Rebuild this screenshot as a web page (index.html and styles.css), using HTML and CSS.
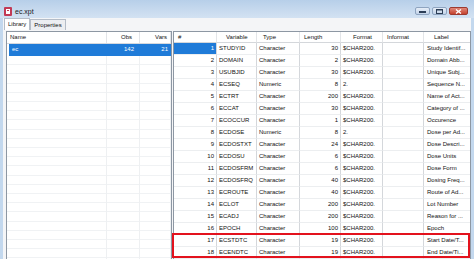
FILE: index.html
```html
<!DOCTYPE html>
<html lang="en">

<head>
    <meta charset="UTF-8">
    <meta name="viewport" content="width=device-width, initial-scale=1.0">
    <title>ec.xpt</title>
    <link rel="stylesheet" href="styles.css">
</head>

<body>
    <div class="window">
        <div class="titlebar">
            <svg class="app-icon" width="8" height="9" viewBox="0 0 8 9">
                <rect x="0" y="0" width="8" height="9" rx="1" fill="#c23a55" />
                <rect x="2" y="2" width="4" height="5" fill="#fff" />
                <rect x="3" y="3" width="2" height="1" fill="#c23a55" />
            </svg>
            <span class="title">ec.xpt</span>
            <div class="controls">
                <span class="ctl">
                    <svg width="7" height="3" viewBox="0 0 7 3"><rect x="0" y="1" width="7" height="2" fill="#2c3e57" /></svg>
                </span>
                <span class="ctl">
                    <svg width="7" height="5" viewBox="0 0 7 5"><rect x="0.5" y="0.5" width="6" height="4" fill="none" stroke="#2c3e57" /><rect x="0" y="0" width="7" height="1.5" fill="#2c3e57" /></svg>
                </span>
                <span class="ctl close">
                    <svg width="7" height="5" viewBox="0 0 7 5"><path d="M1 0.5 L6 4.5 M6 0.5 L1 4.5" stroke="#fff" stroke-width="1.4" /></svg>
                </span>
            </div>
        </div>

        <div class="client">
            <div class="tabs">
                <span class="tab active">Library</span>
                <span class="tab">Properties</span>
            </div>

            <div class="panes">
                <div class="members">
                    <div class="mrow mhead">
                        <span>Name</span>
                        <span class="num">Obs</span>
                        <span class="num">Vars</span>
                    </div>
                    <div class="mrow selected">
                        <span>ec</span>
                        <span class="num">142</span>
                        <span class="num">21</span>
                    </div>
                    <div class="mfill">
                        <span></span><span></span><span></span>
                    </div>
                </div>

                <div class="vars">
                    <div class="vrow vhead">
                        <span class="c-num">#</span>
                        <span class="c-var">Variable</span>
                        <span class="c-type">Type</span>
                        <span class="c-len">Length</span>
                        <span class="c-fmt">Format</span>
                        <span class="c-inf">Informat</span>
                        <span class="c-lbl">Label</span>
                    </div>
                    <div class="vrow current">
                        <span class="c-num">1</span><span class="c-var">STUDYID</span><span class="c-type">Character</span><span class="c-len">30</span><span class="c-fmt">$CHAR200.</span><span class="c-inf"></span><span class="c-lbl">Study Identif...</span>
                    </div>
                    <div class="vrow">
                        <span class="c-num">2</span><span class="c-var">DOMAIN</span><span class="c-type">Character</span><span class="c-len">2</span><span class="c-fmt">$CHAR200.</span><span class="c-inf"></span><span class="c-lbl">Domain Abb...</span>
                    </div>
                    <div class="vrow">
                        <span class="c-num">3</span><span class="c-var">USUBJID</span><span class="c-type">Character</span><span class="c-len">30</span><span class="c-fmt">$CHAR200.</span><span class="c-inf"></span><span class="c-lbl">Unique Subj...</span>
                    </div>
                    <div class="vrow">
                        <span class="c-num">4</span><span class="c-var">ECSEQ</span><span class="c-type">Numeric</span><span class="c-len">8</span><span class="c-fmt">2.</span><span class="c-inf"></span><span class="c-lbl">Sequence N...</span>
                    </div>
                    <div class="vrow">
                        <span class="c-num">5</span><span class="c-var">ECTRT</span><span class="c-type">Character</span><span class="c-len">200</span><span class="c-fmt">$CHAR200.</span><span class="c-inf"></span><span class="c-lbl">Name of Act...</span>
                    </div>
                    <div class="vrow">
                        <span class="c-num">6</span><span class="c-var">ECCAT</span><span class="c-type">Character</span><span class="c-len">30</span><span class="c-fmt">$CHAR200.</span><span class="c-inf"></span><span class="c-lbl">Category of ...</span>
                    </div>
                    <div class="vrow">
                        <span class="c-num">7</span><span class="c-var">ECOCCUR</span><span class="c-type">Character</span><span class="c-len">1</span><span class="c-fmt">$CHAR200.</span><span class="c-inf"></span><span class="c-lbl">Occurence</span>
                    </div>
                    <div class="vrow">
                        <span class="c-num">8</span><span class="c-var">ECDOSE</span><span class="c-type">Numeric</span><span class="c-len">8</span><span class="c-fmt">2.</span><span class="c-inf"></span><span class="c-lbl">Dose per Ad...</span>
                    </div>
                    <div class="vrow">
                        <span class="c-num">9</span><span class="c-var">ECDOSTXT</span><span class="c-type">Character</span><span class="c-len">24</span><span class="c-fmt">$CHAR200.</span><span class="c-inf"></span><span class="c-lbl">Dose Descri...</span>
                    </div>
                    <div class="vrow">
                        <span class="c-num">10</span><span class="c-var">ECDOSU</span><span class="c-type">Character</span><span class="c-len">6</span><span class="c-fmt">$CHAR200.</span><span class="c-inf"></span><span class="c-lbl">Dose Units</span>
                    </div>
                    <div class="vrow">
                        <span class="c-num">11</span><span class="c-var">ECDOSFRM</span><span class="c-type">Character</span><span class="c-len">6</span><span class="c-fmt">$CHAR200.</span><span class="c-inf"></span><span class="c-lbl">Dose Form</span>
                    </div>
                    <div class="vrow">
                        <span class="c-num">12</span><span class="c-var">ECDOSFRQ</span><span class="c-type">Character</span><span class="c-len">40</span><span class="c-fmt">$CHAR200.</span><span class="c-inf"></span><span class="c-lbl">Dosing Freq...</span>
                    </div>
                    <div class="vrow">
                        <span class="c-num">13</span><span class="c-var">ECROUTE</span><span class="c-type">Character</span><span class="c-len">40</span><span class="c-fmt">$CHAR200.</span><span class="c-inf"></span><span class="c-lbl">Route of Ad...</span>
                    </div>
                    <div class="vrow">
                        <span class="c-num">14</span><span class="c-var">ECLOT</span><span class="c-type">Character</span><span class="c-len">200</span><span class="c-fmt">$CHAR200.</span><span class="c-inf"></span><span class="c-lbl">Lot Number</span>
                    </div>
                    <div class="vrow">
                        <span class="c-num">15</span><span class="c-var">ECADJ</span><span class="c-type">Character</span><span class="c-len">200</span><span class="c-fmt">$CHAR200.</span><span class="c-inf"></span><span class="c-lbl">Reason for ...</span>
                    </div>
                    <div class="vrow">
                        <span class="c-num">16</span><span class="c-var">EPOCH</span><span class="c-type">Character</span><span class="c-len">100</span><span class="c-fmt">$CHAR200.</span><span class="c-inf"></span><span class="c-lbl">Epoch</span>
                    </div>
                    <div class="marked">
                        <div class="vrow">
                            <span class="c-num">17</span><span class="c-var">ECSTDTC</span><span class="c-type">Character</span><span class="c-len">19</span><span class="c-fmt">$CHAR200.</span><span class="c-inf"></span><span class="c-lbl">Start Date/T...</span>
                        </div>
                        <div class="vrow">
                            <span class="c-num">18</span><span class="c-var">ECENDTC</span><span class="c-type">Character</span><span class="c-len">19</span><span class="c-fmt">$CHAR200.</span><span class="c-inf"></span><span class="c-lbl">End Date/Ti...</span>
                        </div>
                    </div>
                </div>
            </div>
        </div>
    </div>
</body>

</html>
```

FILE: styles.css
```css
* {
    box-sizing: border-box;
}

body {
    margin: 0;
    width: 474px;
    height: 259px;
    overflow: hidden;
    background: #c3d8ee;
    font-family: "Liberation Sans", Arial, sans-serif;
    font-size: 6px;
    color: #111;
}

.window {
    height: 259px;
    display: flex;
    flex-direction: column;
}

/* title bar */
.titlebar {
    height: 18px;
    padding: 4px 6px 0 4px;
    display: flex;
    align-items: center;
    background: linear-gradient(#b7cfe9, #d3e2f2);
}

.app-icon {
    display: block;
}

.title {
    margin-left: 3px;
    font-size: 7px;
    color: #1a1a1a;
}

.controls {
    margin-left: auto;
    display: flex;
    gap: 2px;
}

.ctl {
    width: 15px;
    height: 8px;
    display: flex;
    align-items: center;
    justify-content: center;
    border: 1px solid #8ea4c0;
    border-radius: 2px;
    background: linear-gradient(#e6eef8, #c2d3e8);
}

.ctl.close {
    width: 19px;
    border-color: #9c3a30;
    background: linear-gradient(#e0877a, #c4422f);
}

/* client area */
.client {
    flex: 1;
    margin: 0 3px;
    background: #f4f5f7;
    display: flex;
    flex-direction: column;
    min-height: 0;
}

.tabs {
    height: 12px;
    padding-left: 1px;
    display: flex;
    align-items: flex-end;
}

.tab {
    height: 11px;
    line-height: 10px;
    padding: 0 3px;
    border: 1px solid #b4bcc7;
    border-bottom: none;
    background: #eceef1;
}

.tab.active {
    height: 12px;
    line-height: 11px;
    background: #fff;
}

.panes {
    flex: 1;
    min-height: 0;
    padding: 1px 0 0 3px;
    display: flex;
}

/* member list */
.members {
    width: 166px;
    border: 1px solid #8d97a3;
    border-bottom: none;
    background: #fff;
    display: flex;
    flex-direction: column;
}

.mrow {
    display: grid;
    grid-template-columns: 100px 33px 1fr;
    height: 12px;
    line-height: 11px;
}

.mrow span {
    padding: 0 3px;
    white-space: nowrap;
    overflow: hidden;
}

.mrow .num {
    text-align: right;
}

.mhead {
    border-bottom: 1px solid #d6d9de;
}

.mhead span {
    border-right: 1px solid #e2e4e8;
}

.mhead span:nth-child(2) {
    padding-right: 7px;
}

.mrow.selected {
    margin-left: 2px;
    background: #1f7bd8;
    color: #fff;
    grid-template-columns: 98px 33px 1fr;
}

.mrow.selected span:nth-child(2) {
    padding-right: 6px;
}

.mfill {
    flex: 1;
    display: grid;
    grid-template-columns: 100px 33px 1fr;
    background: repeating-linear-gradient(to bottom, #fff 0, #fff 8.2px, #f0f2f4 8.2px, #f0f2f4 9.2px);
}

.mfill span {
    border-right: 1px solid #eef0f2;
}

/* variables grid */
.vars {
    flex: 1;
    margin-left: 1px;
    border: 1px solid #8d97a3;
    border-bottom: none;
    background: #fff;
}

.vrow {
    display: grid;
    grid-template-columns: 43px 40px 43px 41px 42px 41px 1fr;
    height: 12px;
}

.vrow span {
    padding: 0 2px;
    line-height: 11px;
    white-space: nowrap;
    overflow: hidden;
    border-right: 1px solid #d4d7db;
    border-bottom: 1px solid #eceef0;
}

.vrow .c-num,
.vrow .c-len {
    text-align: right;
}

.vrow .c-lbl {
    padding-left: 3px;
    border-right: none;
}

.vhead {
    height: 11px;
}

.vhead span {
    line-height: 10px;
    text-align: left !important;
    border-right-color: #e3e5e8;
    border-bottom-color: #d4d7db;
}

.vhead .c-num { padding-left: 4px; }
.vhead .c-var { padding-left: 9px; }
.vhead .c-type { padding-left: 6px; }
.vhead .c-len { padding-left: 4px; }
.vhead .c-fmt { padding-left: 12px; }
.vhead .c-inf { padding-left: 4px; }
.vhead .c-lbl { padding-left: 10px; }

.vrow.current .c-num {
    background: #1f7bd8;
    color: #fff;
}

/* red box drawn over the two rows */
.marked {
    position: relative;
}

.marked::after {
    content: "";
    position: absolute;
    top: -2px;
    left: -2px;
    right: 0;
    bottom: 1px;
    border: 2px solid #e3121d;
}
```
